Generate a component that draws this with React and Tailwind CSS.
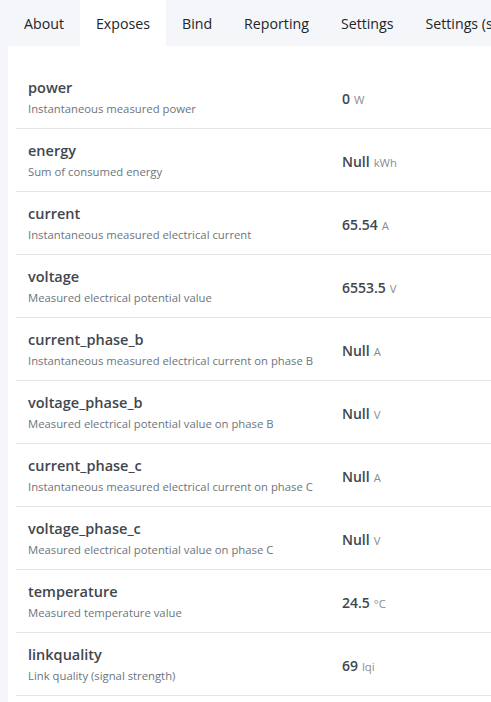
import React from "react";

const tabs = ["About", "Exposes", "Bind", "Reporting", "Settings", "Settings (specific)", "State"];

const rows = [
  ["power", "Instantaneous measured power", "0", "W"],
  ["energy", "Sum of consumed energy", "Null", "kWh"],
  ["current", "Instantaneous measured electrical current", "65.54", "A"],
  ["voltage", "Measured electrical potential value", "6553.5", "V"],
  ["current_phase_b", "Instantaneous measured electrical current on phase B", "Null", "A"],
  ["voltage_phase_b", "Measured electrical potential value on phase B", "Null", "V"],
  ["current_phase_c", "Instantaneous measured electrical current on phase C", "Null", "A"],
  ["voltage_phase_c", "Measured electrical potential value on phase C", "Null", "V"],
  ["temperature", "Measured temperature value", "24.5", "°C"],
  ["linkquality", "Link quality (signal strength)", "69", "lqi"],
];

export default function App() {
  return (
    <div
      className="w-[491px] h-[702px] overflow-hidden bg-[#f4f6f9]"
      style={{ fontFamily: '"Open Sans", "Noto Sans", sans-serif' }}
    >
      <div className="flex h-[46px] pl-2 whitespace-nowrap">
        {tabs.map((t) => (
          <div
            key={t}
            className={`flex items-center pt-[2px] px-4 text-[14.2px] text-[#212529] shrink-0 ${
              t === "Exposes" ? "bg-white" : ""
            }`}
          >
            {t}
          </div>
        ))}
      </div>
      <div className="ml-2 w-[600px] bg-white pt-5 pl-2 h-[700px]">
        {rows.map(([name, desc, val, unit]) => (
          <div key={name} className="flex items-center h-[63px] border-b border-[#e3e6e9]">
            <div className="w-[326px] pl-3 shrink-0">
              <div className="text-[14.5px] leading-[22px] font-semibold text-[#40474d]">{name}</div>
              <div className="text-[11.3px] leading-[18px] mt-[1px] text-[#6c757d]">{desc}</div>
            </div>
            <div className="text-[#40474d] pt-[2px]">
              <span className="text-[14px] font-semibold">{val}</span>
              <span className="text-[11.3px] text-[#868e96] ml-1">{unit}</span>
            </div>
          </div>
        ))}
      </div>
    </div>
  );
}
